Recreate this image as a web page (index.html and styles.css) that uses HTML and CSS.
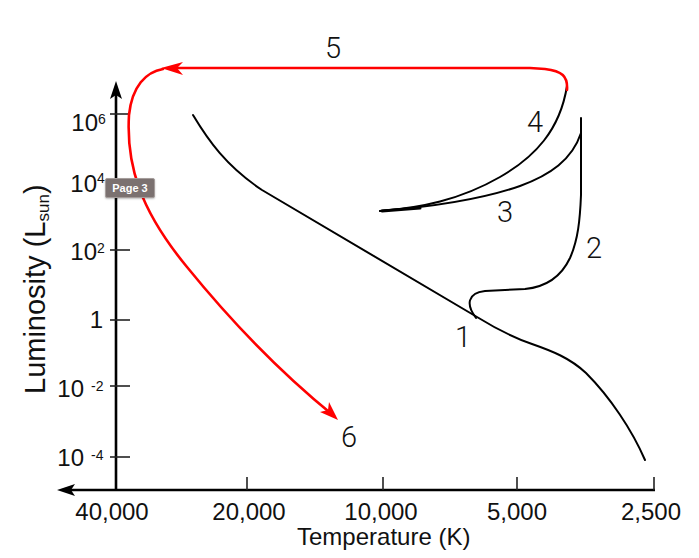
FILE: index.html
```html
<!DOCTYPE html>
<html lang="en">
<head>
<meta charset="utf-8">
<title>Stellar evolution HR diagram</title>
<link rel="stylesheet" href="styles.css">
</head>
<body>
<div class="figure">
  <svg class="chart" width="699" height="558" viewBox="0 0 699 558" xmlns="http://www.w3.org/2000/svg">
    <!-- axes -->
    <g class="axis">
      <line x1="116" y1="92" x2="116" y2="491"/>
      <line x1="68" y1="490" x2="655" y2="490"/>
      <!-- y ticks -->
      <line x1="110" y1="114" x2="130" y2="114"/>
      <line x1="110" y1="183" x2="130" y2="183"/>
      <line x1="110" y1="250" x2="130" y2="250"/>
      <line x1="110" y1="320" x2="130" y2="320"/>
      <line x1="110" y1="386" x2="130" y2="386"/>
      <line x1="110" y1="457" x2="130" y2="457"/>
      <!-- x ticks -->
      <line x1="247" y1="477" x2="247" y2="490"/>
      <line x1="383" y1="477" x2="383" y2="490"/>
      <line x1="517" y1="477" x2="517" y2="490"/>
      <line x1="654" y1="477" x2="654" y2="490"/>
    </g>
    <polygon class="arrow-black" points="116,81 110,99 116,95 122,99"/>
    <polygon class="arrow-black" points="57,490 75,484 71,490 75,496"/>

    <!-- y labels -->
    <g class="tick-label">
      <text x="98" y="131" text-anchor="end">10</text>
      <text x="98" y="124" class="sup">6</text>
      <text x="97" y="192" text-anchor="end">10</text>
      <text x="97" y="183" class="sup">4</text>
      <text x="97" y="260" text-anchor="end">10</text>
      <text x="97" y="253" class="sup">2</text>
      <text x="103" y="328" text-anchor="end">1</text>
      <text x="84" y="397" text-anchor="end">10</text>
      <text x="91" y="391" class="sup">-2</text>
      <text x="84" y="466" text-anchor="end">10</text>
      <text x="91" y="460" class="sup">-4</text>
    </g>

    <!-- x labels -->
    <g class="tick-label" text-anchor="middle">
      <text x="112" y="520">40,000</text>
      <text x="249" y="520">20,000</text>
      <text x="381" y="520">10,000</text>
      <text x="517" y="520">5,000</text>
      <text x="651" y="520">2,500</text>
    </g>
    <text class="axis-title" x="297" y="545">Temperature (K)</text>
    <text class="axis-title lum" transform="translate(45,394) rotate(-90)">Luminosity (L<tspan class="sub" dy="4">sun</tspan><tspan dy="-4">)</tspan></text>

    <!-- tracks -->
    <g class="track">
      <path d="M193,115 C208,140 226,166 262,190 L477,317 C498,330 512,337 532,344 C552,351 570,358 586,373 C610,397 632,430 645,460"/>
      <path d="M476,318 C466,305 467,293 485,291 L525,289 C546,287 561,277 570,258 C578,240 580,220 581,195 L581,118"/>
      <path d="M380,211 C430,207 480,200 520,186 C550,175 572,160 581,133"/>
      <path d="M380,211 C420,208 460,200 500,177 C535,157 560,130 567,86"/>
      <path class="thick" d="M382,211 L420,208"/>
    </g>
    <g class="red">
      <path d="M567,90 C568,76 562,71 545,69 L530,68 L170,68"/>
      <path d="M163,69 C146,72 132,86 129,115 C126,165 140,210 187,267 C230,320 275,368 334,416"/>
    </g>
    <polygon class="arrow-red" points="161,68 183,62 177,68 183,75"/>
    <polygon class="arrow-red" points="338,420 320,412 328,410 329,402"/>

    <!-- stage numbers -->
    <g class="stage">
      <text x="325" y="58">5</text>
      <text x="527" y="132">4</text>
      <text x="497" y="222">3</text>
      <text x="586" y="258">2</text>
      <text x="455" y="347">1</text>
      <text x="341" y="447">6</text>
    </g>
  </svg>
  <div class="badge">Page 3</div>
</div>
</body>
</html>
```
FILE: styles.css
```css
html, body {
  margin: 0;
  padding: 0;
  background: #ffffff;
}

.figure {
  position: relative;
  width: 699px;
  height: 558px;
  overflow: hidden;
}

.chart {
  display: block;
}

.axis line {
  stroke: #000;
  stroke-width: 2.6;
}

.axis line:nth-child(n+3) {
  stroke-width: 1.6;
  stroke: #222;
}

.arrow-black {
  fill: #000;
}

.tick-label text,
.axis-title {
  font-family: "Liberation Sans", Arial, Helvetica, sans-serif;
  font-size: 24px;
  fill: #111;
}

.tick-label .sup {
  font-size: 14px;
}

.axis-title.lum {
  font-size: 29px;
}

.axis-title .sub {
  font-size: 17px;
}

.track path {
  fill: none;
  stroke: #000;
  stroke-width: 2;
  stroke-linecap: round;
  stroke-linejoin: round;
}

.track path.thick {
  stroke-width: 3;
}

.red path {
  fill: none;
  stroke: #ff0000;
  stroke-width: 2.6;
  stroke-linecap: round;
  stroke-linejoin: round;
}

.arrow-red {
  fill: #ff0000;
}

.stage text {
  font-family: Roboto, "Liberation Sans", Arial, sans-serif;
  font-weight: 300;
  font-size: 29px;
  fill: #111;
}

.badge {
  position: absolute;
  left: 105px;
  top: 178px;
  width: 48px;
  height: 18px;
  background: #7b7170;
  border: 1px solid #a59d9b;
  border-radius: 2px;
  box-shadow: 0 1px 2px rgba(0, 0, 0, 0.25);
  color: #ffffff;
  font-family: "Liberation Sans", Arial, Helvetica, sans-serif;
  font-weight: bold;
  font-size: 11px;
  line-height: 18px;
  text-align: center;
}
```
